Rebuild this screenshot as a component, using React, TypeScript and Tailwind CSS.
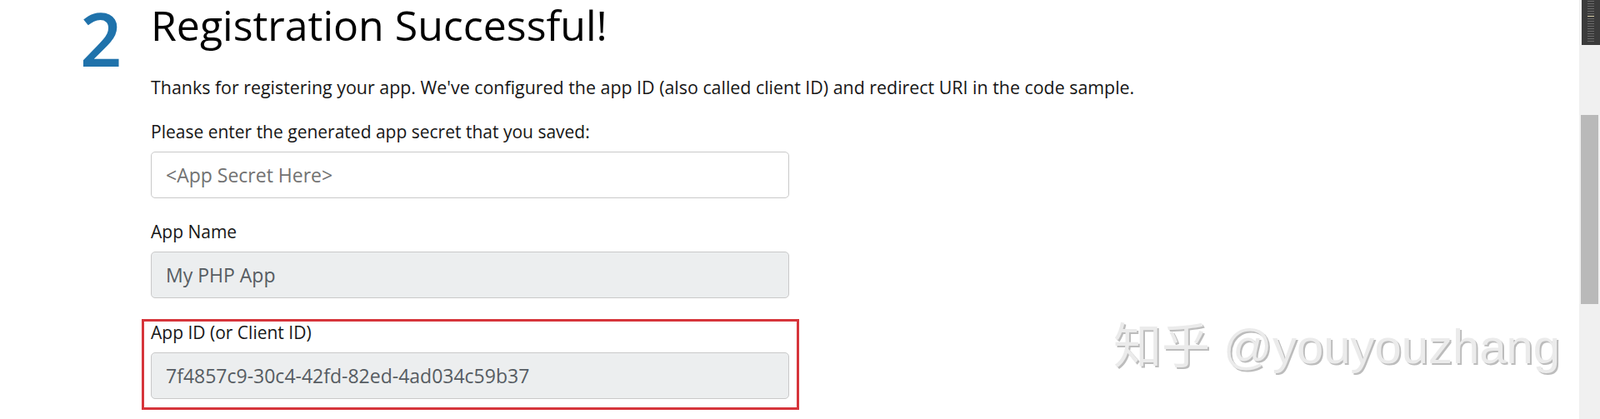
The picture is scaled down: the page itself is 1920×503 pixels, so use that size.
import React from 'react';

const bodyFont = "font-['Open_Sans','Noto_Sans',sans-serif]";

function Field({ label, value, placeholder, disabled }: { label: string; value?: string; placeholder?: string; disabled?: boolean }) {
  return (
    <>
      <label className="block text-[21px] leading-[24px] text-[#161616]">{label}</label>
      <input
        type="text"
        readOnly
        value={value ?? ''}
        placeholder={placeholder}
        className={`mt-[12px] block h-[56px] w-[766px] rounded-[5px] border border-[#c9c9c9] px-[17px] text-[23px] outline-none placeholder:text-[#727272] ${
          disabled ? 'bg-[#eceeef] text-[#565c62]' : 'bg-white text-[#333]'
        }`}
      />
    </>
  );
}

export default function App() {
  return (
    <div className={`relative flex h-[503px] w-[1920px] overflow-hidden bg-white ${bodyFont}`}>
      {/* ---- Page ---- */}
      <div className="flex flex-1 pl-[96px]">
        <div className="w-[85px] shrink-0 text-[88px] font-semibold leading-[93px] text-[#1f72ab]">2</div>

        <div className="flex flex-col">
          <h1 className="text-[50px] font-medium leading-[60px] text-black">Registration Successful!</h1>
          <p className="mt-[33px] text-[21.4px] leading-[24px] text-[#161616]">
            Thanks for registering your app. We've configured the app ID (also called client ID) and redirect URI in the code sample.
          </p>

          <div className="mt-[29px]">
            <Field label="Please enter the generated app secret that you saved:" placeholder="<App Secret Here>" />
          </div>

          <div className="mt-[28px]">
            <Field label="App Name" value="My PHP App" disabled />
          </div>

          {/* highlighted field */}
          <div className="-ml-[11px] mt-[25px] w-[789px] border-[3px] border-[#d6353b] pb-[10px] pl-[8px] pr-[9px] pt-[1px]">
            <Field label="App ID (or Client ID)" value="7f4857c9-30c4-42fd-82ed-4ad034c59b37" disabled />
          </div>
        </div>
      </div>

      {/* ---- Scrollbar ---- */}
      <div className="flex w-[25px] shrink-0 flex-col items-end bg-[#f0f0f0]">
        <div className="flex h-[54px] w-[22px] flex-col items-center gap-[2px] bg-[#3b3b3b] pt-[1px]">
          {Array.from({ length: 17 }).map((_, i) => (
            <div key={i} className={`h-[1px] w-[8px] ${i === 6 ? 'bg-[#d8cfa8]' : 'bg-[#6a6a6a]'}`} />
          ))}
        </div>
        <div className="mr-[2px] mt-[84px] h-[227px] w-[21px] bg-[#b9b9b9]" />
      </div>

      {/* ---- Watermark ---- */}
      <div className="pointer-events-none absolute left-[1336px] top-[380px] whitespace-nowrap font-['Liberation_Sans','Noto_Sans_CJK_SC',sans-serif] text-[58px] leading-[72px] text-[#ebebeb] [text-shadow:2px_2px_0_#bcbcbc]">
        知乎 @youyouzhang
      </div>
    </div>
  );
}
